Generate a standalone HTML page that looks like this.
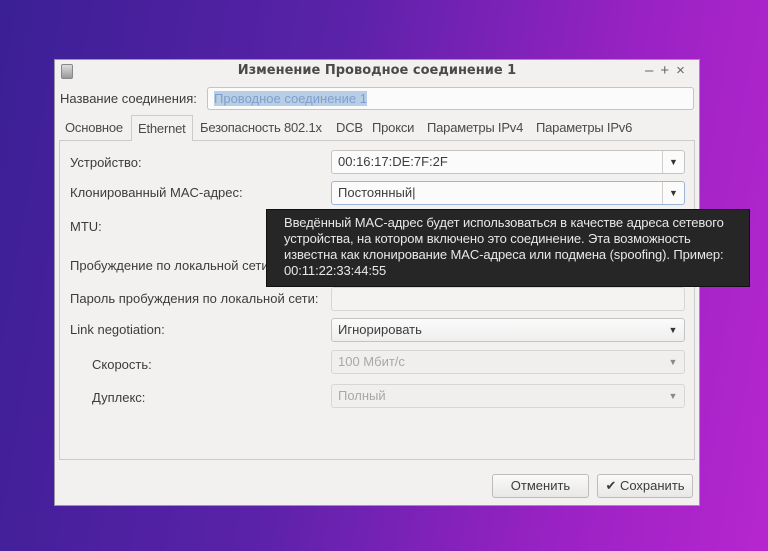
<!DOCTYPE html>
<html><head><meta charset="utf-8"><style>
*{margin:0;padding:0;box-sizing:border-box}
body{width:768px;height:551px;overflow:hidden;position:relative;font-family:"Liberation Sans","DejaVu Sans",sans-serif;font-size:13px;color:#3c3c3c;
background:linear-gradient(100deg,#3b1f95 0%,#5a22a8 40%,#9a22c4 75%,#b626cf 100%)}
.a{position:absolute}
.win{left:54px;top:59px;width:646px;height:447px;background:#f2f1f0;border:1px solid #9a97a0}
.title{left:0;top:0;width:644px;height:25px;background:#f2f1f0;text-align:center;font-weight:bold;font-size:13px;line-height:22px;color:#4a4a4a;font-family:"DejaVu Sans",sans-serif}
.field{background:#fbfbfb;border:1px solid #c6c4c2;border-radius:3px;height:24px;line-height:22px;padding-left:6px}
.dis{background:#f0efee;color:#a8a8a8;border-color:#d8d6d4}
.arr{position:absolute;right:0;top:0;width:22px;height:22px;border-left:1px solid #d0cecc;text-align:center;font-size:9px;color:#333}
.lab{position:absolute;line-height:16px}
.tab{position:absolute;top:115px;height:25px;line-height:25px;padding:0 6px;color:#4a4a4a;letter-spacing:-0.2px}
.btn{background:linear-gradient(#fafafa,#e9e8e7);border:1px solid #bebcba;border-radius:3px;text-align:center;line-height:22px;color:#3c3c3c}
</style></head><body>
<div class="a win">
 <div class="a title">Изменение Проводное соединение 1</div>
 <div class="a" style="left:6px;top:4px;width:12px;height:15px;background:linear-gradient(#ddd,#999);border:1px solid #888;border-radius:2px"></div>
 <div class="a" style="left:590px;top:2px;font-size:15px;color:#666;letter-spacing:7px">–+×</div>
</div>
<div class="lab" style="left:60px;top:91px">Название соединения:</div>
<div class="a field" style="left:207px;top:87px;width:487px;height:23px;line-height:21px"><span style="background:#b8cde6;color:#7ea0cc">Проводное соединение 1</span></div>
<div class="a" style="left:59px;top:140px;width:636px;height:320px;border:1px solid #cdcbc9;background:#f2f1f0"></div>
<div class="tab" style="left:59px">Основное</div>
<div class="tab" style="left:131px;border:1px solid #cdcbc9;border-bottom:none;background:#f2f1f0;height:26px">Ethernet</div>
<div class="tab" style="left:194px">Безопасность 802.1x</div>
<div class="tab" style="left:330px">DCB</div>
<div class="tab" style="left:366px">Прокси</div>
<div class="tab" style="left:421px">Параметры IPv4</div>
<div class="tab" style="left:530px">Параметры IPv6</div>

<div class="lab" style="left:70px;top:155px">Устройство:</div>
<div class="a field" style="left:331px;top:150px;width:354px">00:16:17:DE:7F:2F<div class="arr">▼</div></div>
<div class="lab" style="left:70px;top:185px">Клонированный MAC-адрес:</div>
<div class="a field" style="left:331px;top:181px;width:354px;border-color:#9bb5d8">Постоянный|<div class="arr">▼</div></div>
<div class="lab" style="left:70px;top:219px">MTU:</div>
<div class="lab" style="left:70px;top:258px">Пробуждение по локальной сети:</div>
<div class="lab" style="left:70px;top:291px">Пароль пробуждения по локальной сети:</div>
<div class="a field dis" style="left:331px;top:287px;width:354px;background:#f4f3f2"></div>
<div class="lab" style="left:70px;top:322px">Link negotiation:</div>
<div class="a field" style="left:331px;top:318px;width:354px;background:linear-gradient(#fbfbfb,#efeeed)">Игнорировать<div class="arr" style="border:none">▼</div></div>
<div class="lab" style="left:92px;top:357px">Скорость:</div>
<div class="a field dis" style="left:331px;top:350px;width:354px">100 Мбит/с<div class="arr" style="border:none;color:#888">▼</div></div>
<div class="lab" style="left:92px;top:390px">Дуплекс:</div>
<div class="a field dis" style="left:331px;top:384px;width:354px">Полный<div class="arr" style="border:none;color:#888">▼</div></div>

<div class="a" style="left:266px;top:209px;width:484px;height:78px;background:#262626;border:1px solid #111;color:#e8e8e8;padding:5px 0 0 17px;line-height:16px;font-size:13px;letter-spacing:-0.1px;white-space:nowrap">Введённый MAC-адрес будет использоваться в качестве адреса сетевого<br>устройства, на котором включено это соединение. Эта возможность<br>известна как клонирование MAC-адреса или подмена (spoofing). Пример:<br>00:11:22:33:44:55</div>

<div class="a btn" style="left:492px;top:474px;width:97px;height:24px">Отменить</div>
<div class="a btn" style="left:597px;top:474px;width:96px;height:24px">✔ Сохранить</div>
</body></html>
